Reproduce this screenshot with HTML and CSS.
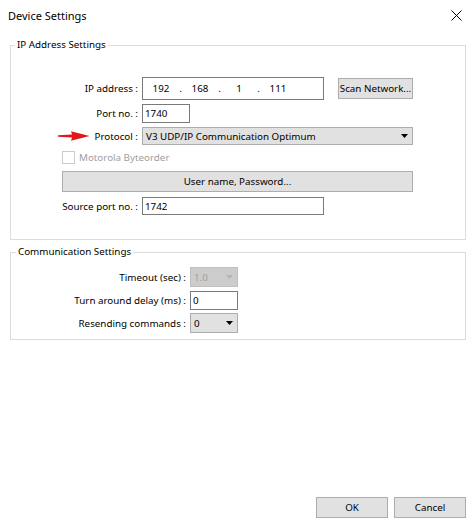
FILE: index.html
```html
<!DOCTYPE html>
<html lang="en">
<head>
    <meta charset="UTF-8">
    <meta name="viewport" content="width=device-width, initial-scale=1.0">
    <title>Device Settings</title>
    <link rel="stylesheet" href="styles.css">
</head>
<body>
    <div class="dialog">
        <div class="titlebar">
            <span class="title">Device Settings</span>
            <svg class="close" width="11" height="11" viewBox="0 0 11 11">
                <path d="M0.5 0.5 L10.5 10.5 M10.5 0.5 L0.5 10.5" stroke="#000" stroke-width="1" fill="none"/>
            </svg>
        </div>

        <fieldset class="group group-ip">
            <legend>IP Address Settings</legend>
            <div class="group-body">
                <div class="row row-ip">
                    <span class="label">IP address :</span>
                    <div class="ip-box">
                        <span class="octet">192</span><span class="dot">.</span>
                        <span class="octet">168</span><span class="dot">.</span>
                        <span class="octet">1</span><span class="dot">.</span>
                        <span class="octet">111</span>
                    </div>
                    <button class="btn btn-scan">Scan Network...</button>
                </div>

                <div class="row row-port">
                    <span class="label">Port no. :</span>
                    <input class="textbox port-box" type="text" value="1740">
                </div>

                <div class="row row-protocol">
                    <svg class="arrow" width="32" height="10" viewBox="0 0 32 10">
                        <path d="M0 4.2 L14 3.4 L13 0.3 L31.5 5 L13 9.7 L14 6.6 L0 5.8 Z" fill="#e3161b"/>
                    </svg>
                    <span class="label">Protocol :</span>
                    <div class="combo protocol-box">
                        <span>V3 UDP/IP Communication Optimum</span>
                        <svg class="combo-arrow" width="7" height="4" viewBox="0 0 7 4"><path d="M0 0 H7 L3.5 4 Z" fill="#000"/></svg>
                    </div>
                </div>

                <div class="row row-check">
                    <span class="checkbox"></span>
                    <span class="disabled-text">Motorola Byteorder</span>
                </div>

                <button class="btn btn-user">User name, Password...</button>

                <div class="row row-source">
                    <span class="label">Source port no. :</span>
                    <input class="textbox source-box" type="text" value="1742">
                </div>
            </div>
        </fieldset>

        <fieldset class="group group-comm">
            <legend>Communication Settings</legend>
            <div class="group-body">
                <div class="row row-timeout">
                    <span class="label">Timeout (sec) :</span>
                    <div class="combo small-box combo-disabled">
                        <span>1.0</span>
                        <svg class="combo-arrow" width="7" height="4" viewBox="0 0 7 4"><path d="M0 0 H7 L3.5 4 Z" fill="#b4b4b4"/></svg>
                    </div>
                </div>
                <div class="row row-delay">
                    <span class="label">Turn around delay (ms) :</span>
                    <input class="textbox small-box" type="text" value="0">
                </div>
                <div class="row row-resend">
                    <span class="label">Resending commands :</span>
                    <div class="combo small-box">
                        <span>0</span>
                        <svg class="combo-arrow" width="7" height="4" viewBox="0 0 7 4"><path d="M0 0 H7 L3.5 4 Z" fill="#000"/></svg>
                    </div>
                </div>
            </div>
        </fieldset>

        <div class="footer">
            <button class="btn btn-footer">OK</button>
            <button class="btn btn-footer">Cancel</button>
        </div>
    </div>
</body>
</html>
```

FILE: styles.css
```css
body {
    margin: 0;
    font-family: 'Noto Sans', 'Open Sans', sans-serif;
    font-size: 9.8px;
    color: #000;
    background-color: #fff;
}
.dialog {
    height: 100vh;
    display: flex;
    flex-direction: column;
}
.titlebar {
    height: 30px;
    flex: none;
    display: flex;
    align-items: center;
    justify-content: space-between;
    padding: 0 12px 0 8px;
}
.title {
    font-size: 11px;
}
.close {
    display: block;
}
.group {
    margin: 7px 8px 0 10px;
    padding: 0;
    border: 1px solid #dcdcdc;
    min-width: 0;
}
.group legend {
    margin-left: 4px;
    padding: 0 2px;
    line-height: 16px;
}
.group-comm {
    margin-top: 4px;
}
.group-comm legend {
    margin-left: 5px;
}
.group-ip .group-body {
    padding: 24px 0 24px 51px;
}
.group-comm .group-body {
    padding: 7px 0 6px 51px;
}
.row {
    display: flex;
    align-items: center;
    gap: 4px;
    position: relative;
}
.label {
    flex: none;
    width: 76px;
    text-align: right;
    white-space: nowrap;
}
.group-comm .label {
    width: 124px;
}
.textbox {
    box-sizing: border-box;
    margin: 0;
    padding: 0 2px;
    border: 1px solid #7a7a7a;
    background: #fff;
    font-family: inherit;
    font-size: inherit;
    color: #000;
    outline: none;
}
.ip-box {
    box-sizing: border-box;
    width: 182px;
    height: 23px;
    border: 1px solid #7a7a7a;
    display: flex;
    align-items: center;
    padding-left: 3px;
}
.octet {
    width: 30px;
    text-align: center;
}
.dot {
    width: 9px;
    text-align: center;
}
.btn {
    box-sizing: border-box;
    margin: 0;
    padding: 0;
    height: 21px;
    background-color: #e1e1e1;
    border: 1px solid #adadad;
    font-family: inherit;
    font-size: inherit;
    color: #000;
}
.btn-scan {
    width: 75px;
    margin-left: 10px;
}
.row-port {
    margin-top: 4px;
}
.port-box {
    width: 48px;
    height: 19px;
}
.row-protocol {
    margin-top: 4px;
}
.arrow {
    position: absolute;
    left: -4px;
    top: 4px;
}
.combo {
    box-sizing: border-box;
    display: flex;
    align-items: center;
    justify-content: space-between;
    padding: 0 4px 0 3px;
    background-color: #e1e1e1;
    border: 1px solid #acacac;
}
.protocol-box {
    width: 271px;
    height: 18px;
}
.row-check {
    margin-top: 6px;
}
.checkbox {
    box-sizing: border-box;
    width: 13px;
    height: 13px;
    border: 1px solid #cccccc;
    background: #fff;
}
.disabled-text {
    color: #a0a0a0;
}
.btn-user {
    display: block;
    width: 351px;
    margin-top: 7px;
}
.row-source {
    margin-top: 5px;
}
.source-box {
    width: 182px;
    height: 18px;
}
.small-box {
    width: 48px;
}
.row-timeout .combo {
    height: 20px;
}
.combo-disabled {
    background-color: #cccccc;
    border-color: #bfbfbf;
    color: #a0a0a0;
}
.row-delay {
    margin-top: 4px;
}
.row-delay .textbox {
    height: 19px;
}
.row-resend {
    margin-top: 3px;
}
.row-resend .combo {
    height: 20px;
}
.footer {
    margin-top: auto;
    display: flex;
    justify-content: flex-end;
    gap: 6px;
    padding: 0 8px 9px 0;
}
.btn-footer {
    width: 72px;
}
```
